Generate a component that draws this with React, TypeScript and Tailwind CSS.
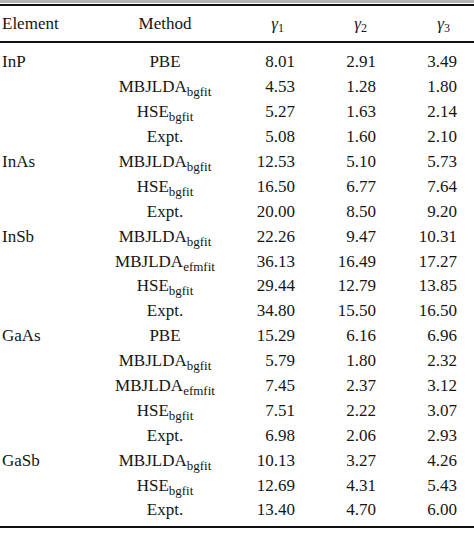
import React from "react";

type Row = { el?: string; m: string; sub?: string; v: [string, string, string] };

const rows: Row[] = [
  { el: "InP", m: "PBE", v: ["8.01", "2.91", "3.49"] },
  { m: "MBJLDA", sub: "bgfit", v: ["4.53", "1.28", "1.80"] },
  { m: "HSE", sub: "bgfit", v: ["5.27", "1.63", "2.14"] },
  { m: "Expt.", v: ["5.08", "1.60", "2.10"] },
  { el: "InAs", m: "MBJLDA", sub: "bgfit", v: ["12.53", "5.10", "5.73"] },
  { m: "HSE", sub: "bgfit", v: ["16.50", "6.77", "7.64"] },
  { m: "Expt.", v: ["20.00", "8.50", "9.20"] },
  { el: "InSb", m: "MBJLDA", sub: "bgfit", v: ["22.26", "9.47", "10.31"] },
  { m: "MBJLDA", sub: "efmfit", v: ["36.13", "16.49", "17.27"] },
  { m: "HSE", sub: "bgfit", v: ["29.44", "12.79", "13.85"] },
  { m: "Expt.", v: ["34.80", "15.50", "16.50"] },
  { el: "GaAs", m: "PBE", v: ["15.29", "6.16", "6.96"] },
  { m: "MBJLDA", sub: "bgfit", v: ["5.79", "1.80", "2.32"] },
  { m: "MBJLDA", sub: "efmfit", v: ["7.45", "2.37", "3.12"] },
  { m: "HSE", sub: "bgfit", v: ["7.51", "2.22", "3.07"] },
  { m: "Expt.", v: ["6.98", "2.06", "2.93"] },
  { el: "GaSb", m: "MBJLDA", sub: "bgfit", v: ["10.13", "3.27", "4.26"] },
  { m: "HSE", sub: "bgfit", v: ["12.69", "4.31", "5.43"] },
  { m: "Expt.", v: ["13.40", "4.70", "6.00"] },
];

const grid = "grid grid-cols-[100px_130px_65px_81px_81px] items-center";

function Gamma({ n }: { n: string }) {
  return (
    <span>
      <span className="italic">γ</span>
      <span className="text-[12px] relative top-[3px]">{n}</span>
    </span>
  );
}

export default function App() {
  return (
    <div
      className="w-[474px] h-[533px] bg-white text-[#151515] text-[17px] leading-none overflow-hidden"
      style={{ fontFamily: '"Liberation Serif", "Times New Roman", serif' }}
    >
      <div className="h-[3px] bg-[#b4b4b4]" />
      <div className="h-[1px]" />
      <div className="h-[2px] bg-[#111]" />
      <div className={`${grid} h-[35px]`}>
        <div className="pl-[2px]">Element</div>
        <div className="text-center">Method</div>
        <div className="text-right pr-[11px]">
          <Gamma n="1" />
        </div>
        <div className="text-right pr-[9px]">
          <Gamma n="2" />
        </div>
        <div className="text-right pr-[7px]">
          <Gamma n="3" />
        </div>
      </div>
      <div className="h-[2px] bg-[#111]" />
      <div className="h-[6.5px]" />
      {rows.map((r, i) => (
        <div key={i} className={`${grid} h-[24.9px]`}>
          <div className="pl-[2px]">{r.el ?? ""}</div>
          <div className="text-center">
            {r.m}
            {r.sub && (
              <span className="text-[13px] relative top-[4px]">{r.sub}</span>
            )}
          </div>
          <div className="text-right">{r.v[0]}</div>
          <div className="text-right">{r.v[1]}</div>
          <div className="text-right">{r.v[2]}</div>
        </div>
      ))}
      <div className="h-[4px]" />
      <div className="h-[2px] bg-[#111]" />
    </div>
  );
}
